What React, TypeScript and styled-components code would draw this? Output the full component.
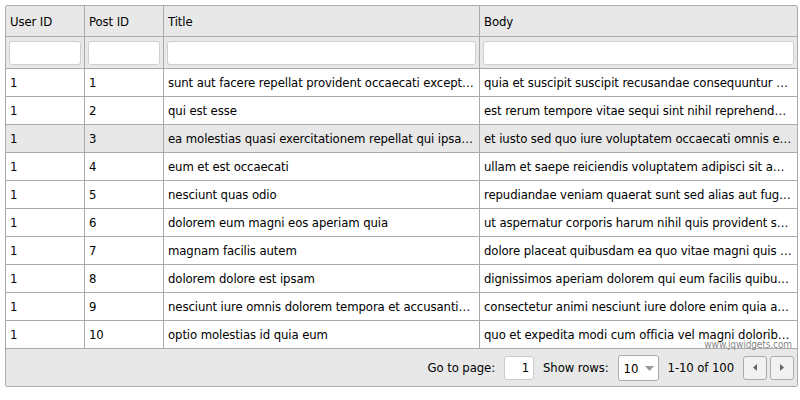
import React from "react";
import styled, { createGlobalStyle } from "styled-components";

interface IPost {
  userId: number;
  id: number;
  title: string;
  body: string;
}

const posts: IPost[] = [
  { userId: 1, id: 1, title: "sunt aut facere repellat provident occaecati excepturi optio reprehenderit", body: "quia et suscipit suscipit recusandae consequuntur expedita et cum reprehenderit" },
  { userId: 1, id: 2, title: "qui est esse", body: "est rerum tempore vitae sequi sint nihil reprehenderit dolor beatae ea dolores neque" },
  { userId: 1, id: 3, title: "ea molestias quasi exercitationem repellat qui ipsa sit aut", body: "et iusto sed quo iure voluptatem occaecati omnis eligendi aut ad" },
  { userId: 1, id: 4, title: "eum et est occaecati", body: "ullam et saepe reiciendis voluptatem adipisci sit amet autem assumenda provident" },
  { userId: 1, id: 5, title: "nesciunt quas odio", body: "repudiandae veniam quaerat sunt sed alias aut fugiat sit autem sed est" },
  { userId: 1, id: 6, title: "dolorem eum magni eos aperiam quia", body: "ut aspernatur corporis harum nihil quis provident sequi mollitia nobis" },
  { userId: 1, id: 7, title: "magnam facilis autem", body: "dolore placeat quibusdam ea quo vitae magni quis enim qui quis quo nemo aut saepe" },
  { userId: 1, id: 8, title: "dolorem dolore est ipsam", body: "dignissimos aperiam dolorem qui eum facilis quibusdam animi sint suscipit" },
  { userId: 1, id: 9, title: "nesciunt iure omnis dolorem tempora et accusantium", body: "consectetur animi nesciunt iure dolore enim quia ad veniam autem ut quam aut nobis" },
  { userId: 1, id: 10, title: "optio molestias id quia eum", body: "quo et expedita modi cum officia vel magni doloribus qui repudiandae" },
];

const columns = ["User ID", "Post ID", "Title", "Body"];
const hoveredRow = 3;

const GlobalStyle = createGlobalStyle`
  body {
    margin: 0;
    background: #ffffff;
    font-family: "DejaVu Sans Condensed", "DejaVu Sans", Verdana, sans-serif;
    font-stretch: condensed;
    letter-spacing: -0.1px;
  }
`;

const App: React.FC = () => {
  return (
    <>
      <GlobalStyle />
      <Page>
        <Grid>
          <Table>
            {columns.map((column, index) => (
              <HeaderCell key={column} last={index === columns.length - 1}>
                {column}
              </HeaderCell>
            ))}
            {columns.map((column, index) => (
              <FilterCell key={column} last={index === columns.length - 1}>
                <FilterInput />
              </FilterCell>
            ))}
            {posts.map((post) => {
              const values = [post.userId, post.id, post.title, post.body];
              return values.map((value, index) => (
                <Cell
                  key={`${post.id}-${index}`}
                  last={index === values.length - 1}
                  hovered={post.id === hoveredRow}
                >
                  <CellText>{value}</CellText>
                </Cell>
              ));
            })}
          </Table>
          <Watermark>www.jqwidgets.com</Watermark>
          <Pager>
            <PagerLabel>Go to page:</PagerLabel>
            <PageInput>1</PageInput>
            <PagerLabel>Show rows:</PagerLabel>
            <RowsSelect>
              <span>10</span>
              <svg width="9" height="5" viewBox="0 0 9 5">
                <path d="M0 0 L9 0 L4.5 5 Z" fill="#999" />
              </svg>
            </RowsSelect>
            <PagerLabel>1-10 of 100</PagerLabel>
            <ArrowGroup>
              <ArrowButton>
                <svg width="4" height="7" viewBox="0 0 4 7">
                  <path d="M4 0 L0 3.5 L4 7 Z" fill="#666" />
                </svg>
              </ArrowButton>
              <ArrowButton>
                <svg width="4" height="7" viewBox="0 0 4 7">
                  <path d="M0 0 L4 3.5 L0 7 Z" fill="#666" />
                </svg>
              </ArrowButton>
            </ArrowGroup>
          </Pager>
        </Grid>
      </Page>
    </>
  );
};

const Page = styled.div`
  padding: 5px;
`;

const Grid = styled.div`
  position: relative;
  width: 791px;
  border: 1px solid #aaaaaa;
  border-radius: 2px;
  background: #ffffff;
  color: #000000;
  font-size: 13px;
`;

const Table = styled.div`
  display: grid;
  grid-template-columns: 79px 79px 316px 1fr;
  grid-template-rows: 31px 32px repeat(10, 28px);
`;

const HeaderCell = styled.div<{ last: boolean }>`
  display: flex;
  align-items: center;
  padding: 1px 4px 0;
  background: #e8e8e8;
  border-right: ${(p) => (p.last ? "none" : "1px solid #aaaaaa")};
  border-bottom: 1px solid #aaaaaa;
  white-space: nowrap;
`;

const FilterCell = styled.div<{ last: boolean }>`
  display: flex;
  align-items: center;
  padding: 0 3px;
  background: #e8e8e8;
  border-right: ${(p) => (p.last ? "none" : "1px solid #aaaaaa")};
  border-bottom: 1px solid #aaaaaa;
`;

const FilterInput = styled.div`
  flex: 1;
  height: 22px;
  background: #ffffff;
  border: 1px solid #cfcfcf;
  border-radius: 3px;
`;

const Cell = styled.div<{ last: boolean; hovered: boolean }>`
  display: flex;
  align-items: center;
  min-width: 0;
  padding: 0 4px;
  background: ${(p) => (p.hovered ? "#e8e8e8" : "#ffffff")};
  border-right: ${(p) => (p.last ? "none" : "1px solid #aaaaaa")};
  border-bottom: 1px solid #aaaaaa;
`;

const CellText = styled.span`
  overflow: hidden;
  white-space: nowrap;
  text-overflow: ellipsis;
`;

const Watermark = styled.div`
  position: absolute;
  right: 5px;
  top: 333px;
  font-size: 10px;
  color: #888888;
`;

const Pager = styled.div`
  display: flex;
  align-items: center;
  justify-content: flex-end;
  gap: 9px;
  height: 37px;
  padding-right: 3px;
  background: #e8e8e8;
  border-radius: 0 0 2px 2px;
`;

const PagerLabel = styled.span`
  white-space: nowrap;
`;

const PageInput = styled.div`
  width: 20px;
  height: 22px;
  padding: 0 4px;
  display: flex;
  align-items: center;
  justify-content: flex-end;
  background: #ffffff;
  border: 1px solid #cccccc;
  border-radius: 3px;
`;

const RowsSelect = styled.div`
  width: 30px;
  height: 22px;
  padding: 2px 4px 0 5px;
  display: flex;
  align-items: center;
  justify-content: space-between;
  background: #ffffff;
  border: 1px solid #aaaaaa;
  border-radius: 3px;
`;

const ArrowGroup = styled.div`
  display: flex;
  gap: 3px;
`;

const ArrowButton = styled.div`
  width: 22px;
  height: 22px;
  display: flex;
  align-items: center;
  justify-content: center;
  background: #f2f2f2;
  border: 1px solid #aaaaaa;
  border-radius: 3px;
`;

export default App;
